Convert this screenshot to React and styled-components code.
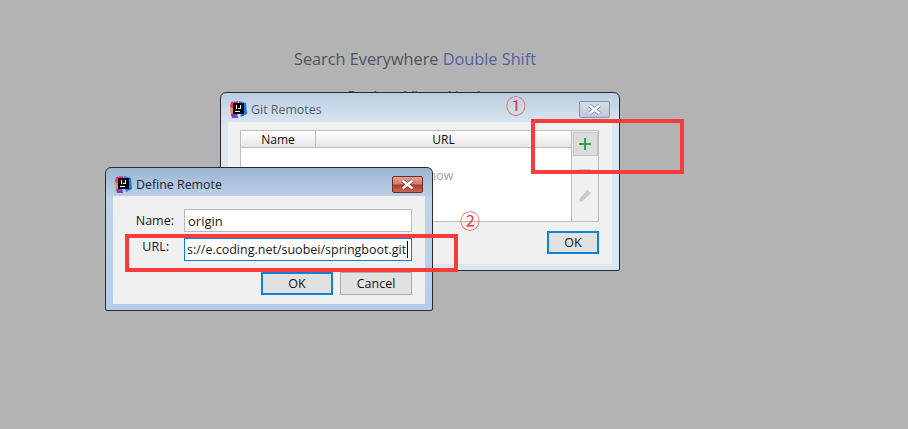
import React from "react";
import styled, { createGlobalStyle } from "styled-components";

const GlobalStyle = createGlobalStyle`
  html, body {
    margin: 0;
    padding: 0;
    background: #b3b3b3;
  }
  body {
    font-family: "Open Sans", "Noto Sans", sans-serif;
  }
`;

const Desktop = styled.div`
  position: relative;
  width: 908px;
  height: 429px;
  overflow: hidden;
  background: #b3b3b3;
`;

const Hints = styled.div`
  display: flex;
  flex-direction: column;
  align-items: center;
  gap: 16px;
  padding: 48px 78px 0 0;
  font-size: 16.3px;
  line-height: 22px;
  color: #4f545a;
`;

const Hint = styled.div`
  white-space: nowrap;
`;

const Shortcut = styled.span`
  color: #51639a;
`;

const Window = styled.div`
  position: absolute;
  box-sizing: border-box;
  display: flex;
  flex-direction: column;
  left: ${({ $x }) => $x}px;
  top: ${({ $y }) => $y}px;
  width: ${({ $w }) => $w}px;
  height: ${({ $h }) => $h}px;
  padding: 0 7px 6px;
  border: 1px solid #2b2b2b;
  border-radius: 6px 6px 2px 2px;
  background: ${({ $active }) =>
    $active
      ? "linear-gradient(#9cb5d1 0, #c0d4e9 32px, #b4cde8 100%)"
      : "linear-gradient(#bccde0 0, #dae6f2 32px, #dbe6f3 100%)"};
`;

const TitleBar = styled.div`
  box-sizing: border-box;
  display: flex;
  align-items: center;
  height: ${({ $h }) => $h}px;
  flex: none;
  padding: 4px 2px 0 2px;
  gap: 4px;
`;

const Title = styled.span`
  flex: 1;
  font-size: 12.4px;
  color: ${({ $active }) => ($active ? "#1c2530" : "#57616b")};
`;

const CloseButton = styled.div`
  display: flex;
  align-items: center;
  justify-content: center;
  box-sizing: border-box;
  width: 31px;
  height: 17px;
  border: 1px solid ${({ $active }) => ($active ? "#6a2e2a" : "#8494ab")};
  border-radius: 2px;
  background: ${({ $active }) =>
    $active
      ? "linear-gradient(#e7a193 0, #d27c6c 45%, #b23a28 55%, #c86a58 100%)"
      : "linear-gradient(#d3dce7, #bccadb)"};
`;

const Body = styled.div`
  flex: 1;
  display: flex;
  flex-direction: column;
  background: #f0f0f0;
`;

const RemotesBody = styled(Body)`
  padding: 8px 13px 9px 12px;
`;

const RemotesTable = styled.div`
  display: flex;
  height: 92px;
  box-sizing: border-box;
  border: 1px solid #bdbdbd;
  background: #fff;
`;

const TableMain = styled.div`
  flex: 1;
  display: flex;
  flex-direction: column;
`;

const TableHeader = styled.div`
  display: flex;
  height: 16px;
  border-bottom: 1px solid #bcbcbc;
  background: linear-gradient(#ffffff, #e6e6e6);
  font-size: 12px;
  line-height: 18px;
  color: #111;
  text-align: center;
`;

const HeaderCell = styled.div`
  box-sizing: border-box;
  flex: ${({ $w }) => ($w ? `0 0 ${$w}px` : 1)};
  ${({ $w }) => $w && "border-right: 1px solid #bcbcbc;"}
`;

const EmptyText = styled.div`
  flex: 1;
  display: flex;
  align-items: center;
  justify-content: center;
  font-size: 12.3px;
  padding-bottom: 19px;
  color: #a5a5a5;
`;

const SideBar = styled.div`
  flex: 0 0 26px;
  display: flex;
  flex-direction: column;
  align-items: center;
  border-left: 1px solid #bdbdbd;
  background: #f0f0f0;
`;

const SideButton = styled.div`
  box-sizing: border-box;
  display: flex;
  align-items: center;
  justify-content: center;
  width: 25px;
  height: 24px;
  margin-top: ${({ $first }) => ($first ? "1px" : "0")};
  padding-top: ${({ $drop }) => $drop || 0}px;
  ${({ $hot }) => $hot && "background: #dcdcdc; border: 1px solid #c4c4c4;"}
`;

const Footer = styled.div`
  display: flex;
  justify-content: flex-end;
  gap: 7px;
  margin-top: ${({ $gap }) => $gap}px;
`;

const Button = styled.div`
  box-sizing: border-box;
  display: flex;
  align-items: center;
  justify-content: center;
  width: ${({ $w }) => $w}px;
  height: 23px;
  background: #e1e1e1;
  border: ${({ $primary }) => ($primary ? "2px solid #0a82d8" : "1px solid #adadad")};
  font-size: 12.5px;
  color: #111;
`;

const RemoteForm = styled(Body)`
  padding: 13px 13px 9px 0;
`;

const FormGrid = styled.div`
  display: grid;
  grid-template-columns: 71px 1fr;
  row-gap: 6px;
`;

const Label = styled.label`
  justify-self: end;
  font-size: 12.5px;
  line-height: 17px;
  color: #1a1a1a;
  padding-right: ${({ $inset }) => ($inset ? 15 : 10)}px;
  padding-top: ${({ $inset }) => ($inset ? 0 : 3)}px;
`;

const Field = styled.div`
  box-sizing: border-box;
  display: flex;
  align-items: center;
  height: 23px;
  padding-left: ${({ $focus }) => ($focus ? 2 : 3)}px;
  padding-bottom: ${({ $focus }) => ($focus ? 1 : 0)}px;
  background: #fff;
  border: 1px solid ${({ $focus }) => ($focus ? "#0a82d8" : "#b9b9b9")};
  font-size: ${({ $focus }) => ($focus ? 12.5 : 13)}px;
  color: #1a1a1a;
  white-space: nowrap;
  overflow: hidden;
`;

const Caret = styled.span`
  flex: none;
  width: 1px;
  height: 17px;
  margin-left: 1px;
  background: #000;
`;

const Annotation = styled.div`
  position: absolute;
  box-sizing: border-box;
  left: ${({ $x }) => $x}px;
  top: ${({ $y }) => $y}px;
  width: ${({ $w }) => $w}px;
  height: ${({ $h }) => $h}px;
  border: 4px solid #f83c3c;
`;

const Marker = styled.span`
  position: absolute;
  left: ${({ $x }) => $x}px;
  top: ${({ $y }) => $y}px;
  font-family: "Noto Sans CJK SC", sans-serif;
  font-size: 20px;
  line-height: 20px;
  color: #f43c3c;
`;

const IdeaLogo = () => (
  <svg width="17" height="17" viewBox="0 0 17 17" style={{ flex: "none" }}>
    <path d="M1 1 L8 0 L8 7 L2 9 L0 5 Z" fill="#f0336f" />
    <path d="M0 7 L5 7 L6 15 L1 15 Z" fill="#f7902a" />
    <path d="M9 0 L16 2 L17 13 L11 16 L9 8 Z" fill="#1c78e6" />
    <path d="M1 13 L7 12 L8 17 L2 17 Z" fill="#7c3fd6" />
    <rect x="3" y="2" width="11" height="11" fill="#000" />
    <rect x="5" y="10" width="5" height="1" fill="#fff" />
    <rect x="6" y="4" width="1" height="4" fill="#fff" />
    <rect x="10" y="4" width="1" height="4" fill="#fff" />
    <rect x="8" y="7" width="2" height="1" fill="#fff" />
  </svg>
);

const CloseGlyph = ({ $active }) => (
  <svg width="15" height="11" viewBox="0 0 15 11">
    <path
      d="M2.5 1.5 L12.5 9.5 M12.5 1.5 L2.5 9.5"
      stroke={$active ? "#6e3a33" : "#68727e"}
      strokeWidth="3.8"
      fill="none"
    />
    <path
      d="M2.5 1.5 L12.5 9.5 M12.5 1.5 L2.5 9.5"
      stroke="#fff"
      strokeWidth="2.6"
      fill="none"
    />
  </svg>
);

const PlusIcon = () => (
  <svg width="14" height="14" viewBox="0 0 14 14">
    <path d="M7 1 V13 M1 7 H13" stroke="#2fa44a" strokeWidth="2" fill="none" />
  </svg>
);

const MinusIcon = () => (
  <svg width="14" height="14" viewBox="0 0 14 14">
    <rect x="1" y="8" width="12" height="3" fill="#cfcfcf" />
  </svg>
);

const EditIcon = () => (
  <svg width="14" height="14" viewBox="0 0 14 14">
    <path d="M9.5 1 L13 4 L5 12 L1 13 L2 9 Z" fill="#cbcbcb" />
  </svg>
);

export default function App() {
  return (
    <Desktop>
      <GlobalStyle />
      <Hints>
        <Hint>
          Search Everywhere <Shortcut>Double Shift</Shortcut>
        </Hint>
        <Hint>
          Project View <Shortcut>Alt+1</Shortcut>
        </Hint>
      </Hints>

      <Window $x={220} $y={92} $w={400} $h={179}>
        <TitleBar $h={29}>
          <IdeaLogo />
          <Title>Git Remotes</Title>
          <CloseButton>
            <CloseGlyph />
          </CloseButton>
        </TitleBar>
        <RemotesBody>
          <RemotesTable>
            <TableMain>
              <TableHeader>
                <HeaderCell $w={75}>Name</HeaderCell>
                <HeaderCell>URL</HeaderCell>
              </TableHeader>
              <EmptyText>Nothing to show</EmptyText>
            </TableMain>
            <SideBar>
              <SideButton $first $hot>
                <PlusIcon />
              </SideButton>
              <SideButton>
                <MinusIcon />
              </SideButton>
              <SideButton $drop={8}>
                <EditIcon />
              </SideButton>
            </SideBar>
          </RemotesTable>
          <Footer $gap={9}>
            <Button $primary $w={52}>
              OK
            </Button>
          </Footer>
        </RemotesBody>
      </Window>

      <Window $active $x={105} $y={167} $w={328} $h={144}>
        <TitleBar $h={28}>
          <IdeaLogo />
          <Title $active>Define Remote</Title>
          <CloseButton $active>
            <CloseGlyph $active />
          </CloseButton>
        </TitleBar>
        <RemoteForm>
          <FormGrid>
            <Label>Name:</Label>
            <Field>origin</Field>
            <Label $inset>URL:</Label>
            <Field $focus>
              s://e.coding.net/suobei/springboot.git
              <Caret />
            </Field>
          </FormGrid>
          <Footer $gap={11}>
            <Button $primary $w={72}>
              OK
            </Button>
            <Button $w={72}>Cancel</Button>
          </Footer>
        </RemoteForm>
      </Window>

      <Annotation $x={531} $y={119} $w={153} $h={55} />
      <Annotation $x={125} $y={234} $w={333} $h={38} />
      <Marker $x={506} $y={96}>①</Marker>
      <Marker $x={460} $y={211}>②</Marker>
    </Desktop>
  );
}
